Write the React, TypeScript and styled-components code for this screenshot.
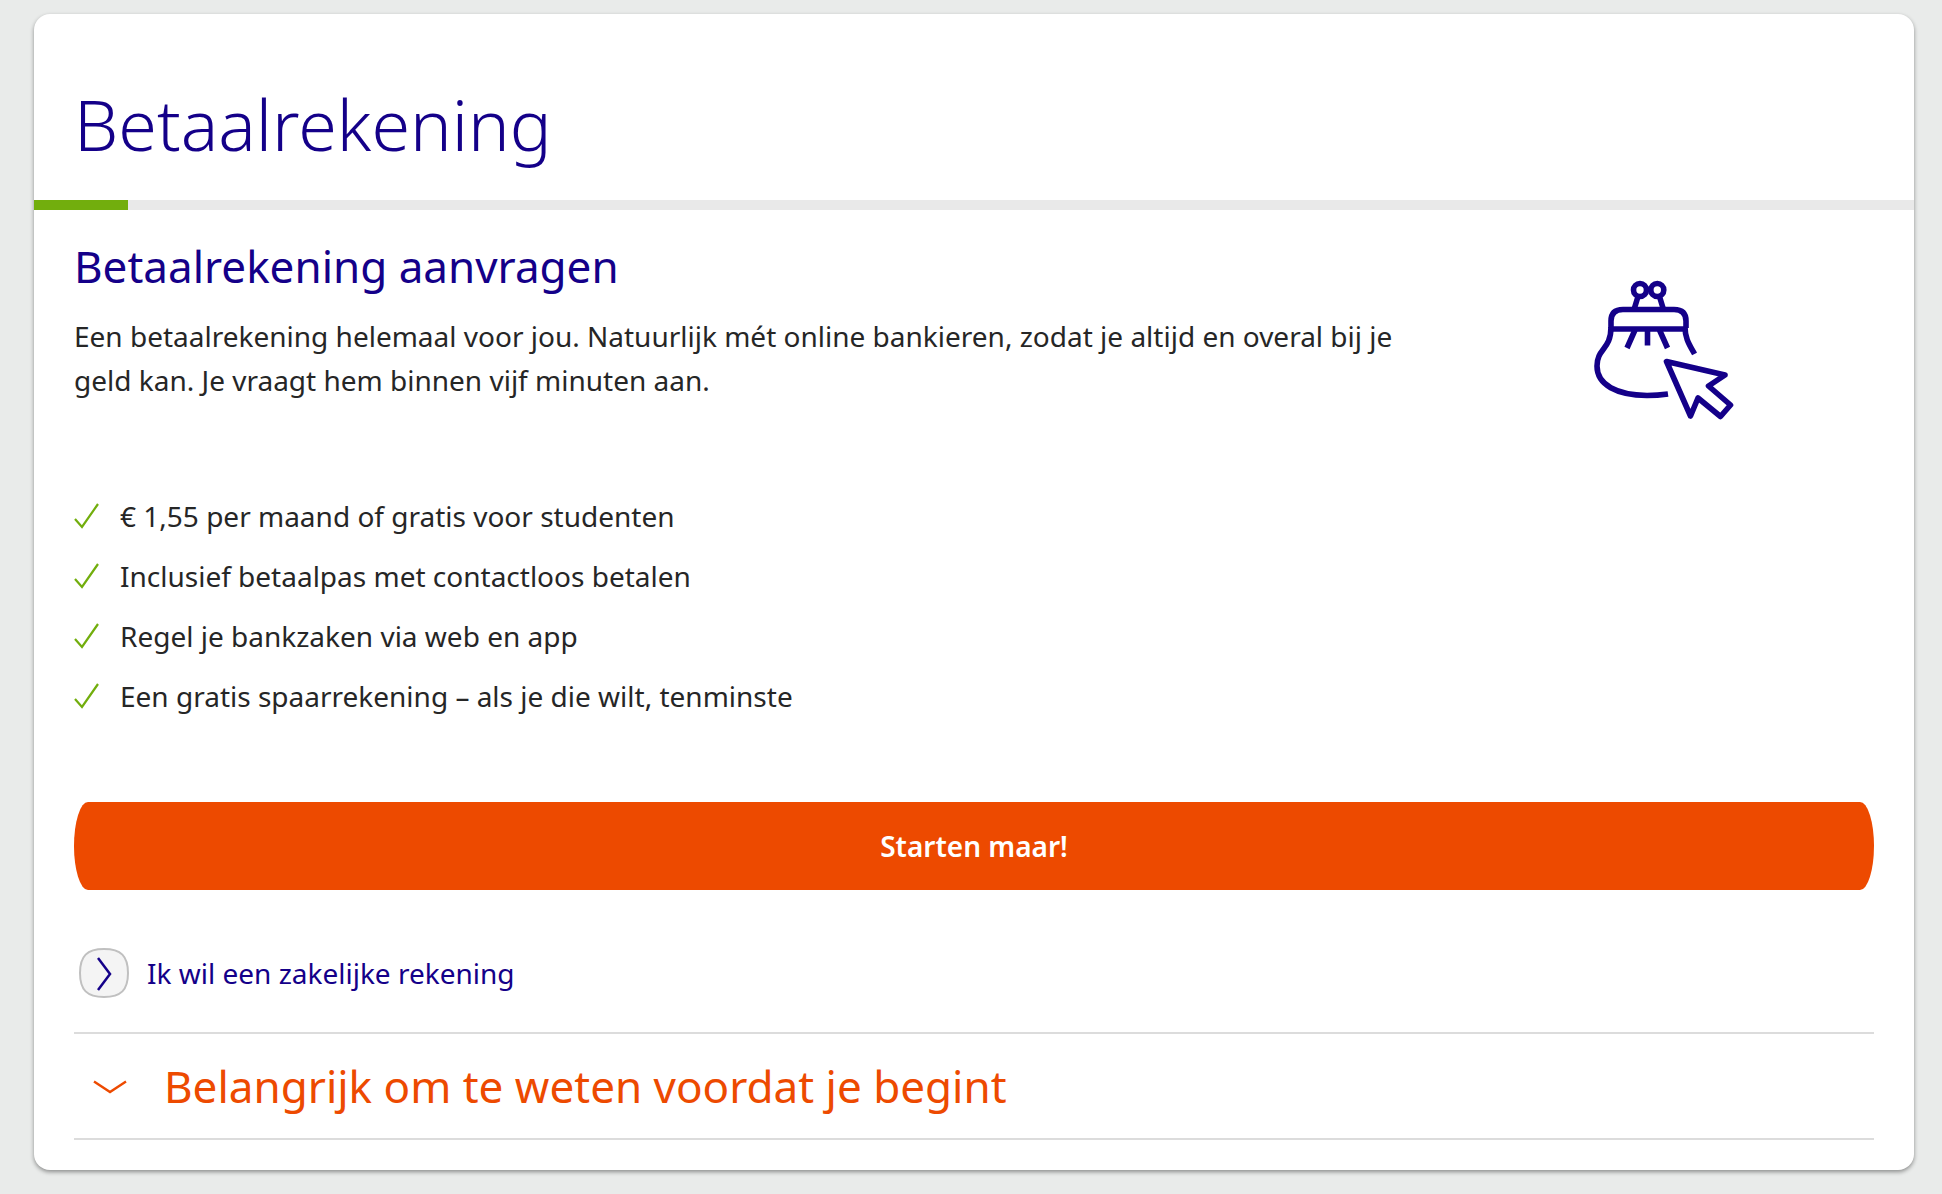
import React, { useState } from "react";
import styled, { createGlobalStyle } from "styled-components";

const navy = "#140089";
const orange = "#ed4a00";
const green = "#72ae0d";

const GlobalStyle = createGlobalStyle`
  *, *::before, *::after { box-sizing: border-box; }
  body {
    margin: 0;
    background: #e9ebea;
    color: #262626;
    font-family: "Noto Sans", "Open Sans", sans-serif;
    font-size: 28px;
    line-height: 44px;
  }
`;

const Page = styled.main`
  padding: 14px 28px 24px 34px;
`;

const Card = styled.article`
  background: #fff;
  border-radius: 16px;
  box-shadow: 0 2px 4px rgba(0, 0, 0, 0.4);
  overflow: hidden;
`;

const Header = styled.header`
  padding: 62px 40px 28px;
`;

const Title = styled.h1`
  margin: 0;
  color: ${navy};
  font-size: 70px;
  line-height: 96px;
  font-weight: 300;
`;

const Progress = styled.div`
  height: 10px;
  background: #e9e9e9;
`;

const ProgressFill = styled.div`
  height: 100%;
  background: ${green};
`;

const Content = styled.div`
  padding: 26px 40px 30px;
`;

const Intro = styled.section`
  display: grid;
  grid-template-columns: 3fr 1fr;
`;

const Subtitle = styled.h2`
  margin: 0 0 18px;
  color: ${navy};
  font-size: 44px;
  line-height: 60px;
  font-weight: 400;
`;

const Text = styled.p`
  margin: 0;
`;

const Picture = styled.div`
  display: flex;
  justify-content: center;
  padding: 42px 0 0 30px;
`;

const Benefits = styled.ul`
  display: grid;
  gap: 16px;
  margin: 72px 0 84px;
  padding: 0;
  list-style: none;
`;

const Benefit = styled.li`
  display: flex;
  align-items: center;
  gap: 20px;
`;

const StartButton = styled.button`
  display: block;
  width: 100%;
  height: 88px;
  border: 0;
  border-radius: 14px / 44px;
  background: ${orange};
  color: #fff;
  font: inherit;
  font-weight: 600;
  cursor: pointer;
`;

const BusinessLink = styled.a`
  display: inline-flex;
  align-items: center;
  gap: 18px;
  margin: 58px 0 34px 5px;
  color: ${navy};
  text-decoration: none;
  vertical-align: top;
`;

const Accordion = styled.section`
  border-top: 2px solid #dcdcdc;
  border-bottom: 2px solid #dcdcdc;
`;

const AccordionHeading = styled.h2`
  margin: 0;
  font-size: 44px;
  line-height: 60px;
  font-weight: 400;
`;

const AccordionButton = styled.button`
  display: flex;
  align-items: center;
  gap: 36px;
  width: 100%;
  padding: 22px 18px;
  border: 0;
  background: none;
  color: ${orange};
  font: inherit;
  text-align: left;
  cursor: pointer;
`;

const AccordionBody = styled.p`
  margin: 0;
  padding: 0 18px 22px 92px;
`;

const PurseIcon = () => (
  <svg width="144" height="144" viewBox="0 0 144 144" fill="none" stroke={navy} strokeWidth="5.6" aria-hidden="true">
    <circle cx="48" cy="12" r="6.5" />
    <circle cx="65.3" cy="12" r="6.5" />
    <path d="M46 18.5 42.500 30M67.500 18.500 71 30" />
    <path d="M19 50V43Q19 31.500 31 31.500H82Q94 31.500 94 43V50M19 51H94" />
    <path d="M19 49C19 72 5 70 5 88C5 107 25 117 55 117.500C62 117.500 69 117 76 116" />
    <path d="M93 49C93 60 97 66 102.500 76" />
    <path d="M43 52 35 70M55.500 52V67.500M67.500 52 75.500 70" />
    <path d="M74.500 83.500 133 97 116.500 108 138.500 127 128.500 138.500 106 120 98.500 138Z" strokeLinejoin="round" />
  </svg>
);

const CheckIcon = () => (
  <svg width="26" height="26" viewBox="0 0 26 26" fill="none" stroke={green} strokeWidth="2.2" aria-hidden="true">
    <path d="M1 16 8 24 24 1" />
  </svg>
);

const ArrowBadge = () => (
  <svg width="50" height="50" viewBox="0 0 50 50" fill="none" aria-hidden="true">
    <path d="M25 1C42 1 49 8 49 25S42 49 25 49 1 42 1 25 8 1 25 1Z" fill="#f4f4f4" stroke="#c0c0c0" strokeWidth="2" />
    <path d="M19 10 31 26 19 42" stroke={navy} strokeWidth="2.5" />
  </svg>
);

const ChevronIcon = () => (
  <svg width="36" height="16" viewBox="0 0 36 16" fill="none" stroke={orange} strokeWidth="2.4" aria-hidden="true">
    <path d="M2 3.500 18 14 34 3.500" />
  </svg>
);

const benefits = [
  "€ 1,55 per maand of gratis voor studenten",
  "Inclusief betaalpas met contactloos betalen",
  "Regel je bankzaken via web en app",
  "Een gratis spaarrekening – als je die wilt, tenminste",
];

export default function App() {
  const [open, setOpen] = useState(false);
  const progress = 5;

  return (
    <>
      <GlobalStyle />
      <Page>
        <Card>
          <Header>
            <Title>Betaalrekening</Title>
          </Header>
          <Progress role="progressbar" aria-label="Voortgang" aria-valuenow={progress} aria-valuemin={0} aria-valuemax={100}>
            <ProgressFill style={{ width: `${progress}%` }} />
          </Progress>
          <Content>
            <Intro>
              <div>
                <Subtitle>Betaalrekening aanvragen</Subtitle>
                <Text>
                  Een betaalrekening helemaal voor jou. Natuurlijk mét online bankieren, zodat je altijd en overal bij je
                  geld kan. Je vraagt hem binnen vijf minuten aan.
                </Text>
              </div>
              <Picture>
                <PurseIcon />
              </Picture>
            </Intro>
            <Benefits>
              {benefits.map((benefit) => (
                <Benefit key={benefit}>
                  <CheckIcon />
                  {benefit}
                </Benefit>
              ))}
            </Benefits>
            <StartButton type="button">Starten maar!</StartButton>
            <BusinessLink href="#zakelijk">
              <ArrowBadge />
              Ik wil een zakelijke rekening
            </BusinessLink>
            <Accordion>
              <AccordionHeading>
                <AccordionButton type="button" aria-expanded={open} onClick={() => setOpen(!open)}>
                  <ChevronIcon />
                  Belangrijk om te weten voordat je begint
                </AccordionButton>
              </AccordionHeading>
              {open && <AccordionBody>Je vraagt hem binnen vijf minuten aan.</AccordionBody>}
            </Accordion>
          </Content>
        </Card>
      </Page>
    </>
  );
}
